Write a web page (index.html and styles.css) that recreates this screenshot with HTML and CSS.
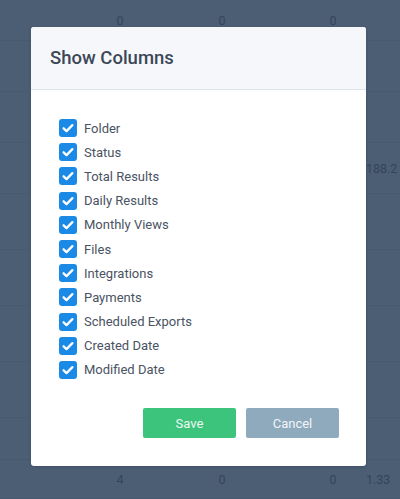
FILE: index.html
```html
<!DOCTYPE html>
<html lang="en">
<head>
<meta charset="utf-8">
<title>Show Columns</title>
<link rel="stylesheet" href="styles.css">
</head>
<body>
  <div class="table">
    <div class="row r-top"><span class="c1">0</span><span class="c2">0</span><span class="c3">0</span></div>
    <div class="row r-mid"></div>
    <div class="row r-mid"></div>
    <div class="row r-std"><span class="c4">188.2</span></div>
    <div class="row r-tall"></div>
    <div class="row r-tall"></div>
    <div class="row r-tall"></div>
    <div class="row r-tall"></div>
    <div class="row r-short"></div>
    <div class="row r-last"><span class="c1">4</span><span class="c2">0</span><span class="c3">0</span><span class="c4">1.33</span></div>
  </div>

  <div class="overlay">
    <div class="modal">
      <div class="modal-header">
        <h2 class="modal-title">Show Columns</h2>
      </div>
      <div class="modal-body">
        <ul class="col-list">
          <li class="col-item"><span class="check"><svg viewBox="0 0 18 18"><path d="M4.6 9.3l2.9 2.8 5.9-6"/></svg></span>Folder</li>
          <li class="col-item"><span class="check"><svg viewBox="0 0 18 18"><path d="M4.6 9.3l2.9 2.8 5.9-6"/></svg></span>Status</li>
          <li class="col-item"><span class="check"><svg viewBox="0 0 18 18"><path d="M4.6 9.3l2.9 2.8 5.9-6"/></svg></span>Total Results</li>
          <li class="col-item"><span class="check"><svg viewBox="0 0 18 18"><path d="M4.6 9.3l2.9 2.8 5.9-6"/></svg></span>Daily Results</li>
          <li class="col-item"><span class="check"><svg viewBox="0 0 18 18"><path d="M4.6 9.3l2.9 2.8 5.9-6"/></svg></span>Monthly Views</li>
          <li class="col-item"><span class="check"><svg viewBox="0 0 18 18"><path d="M4.6 9.3l2.9 2.8 5.9-6"/></svg></span>Files</li>
          <li class="col-item"><span class="check"><svg viewBox="0 0 18 18"><path d="M4.6 9.3l2.9 2.8 5.9-6"/></svg></span>Integrations</li>
          <li class="col-item"><span class="check"><svg viewBox="0 0 18 18"><path d="M4.6 9.3l2.9 2.8 5.9-6"/></svg></span>Payments</li>
          <li class="col-item"><span class="check"><svg viewBox="0 0 18 18"><path d="M4.6 9.3l2.9 2.8 5.9-6"/></svg></span>Scheduled Exports</li>
          <li class="col-item"><span class="check"><svg viewBox="0 0 18 18"><path d="M4.6 9.3l2.9 2.8 5.9-6"/></svg></span>Created Date</li>
          <li class="col-item"><span class="check"><svg viewBox="0 0 18 18"><path d="M4.6 9.3l2.9 2.8 5.9-6"/></svg></span>Modified Date</li>
        </ul>
        <div class="actions">
          <button class="btn btn-save">Save</button>
          <button class="btn btn-cancel">Cancel</button>
        </div>
      </div>
    </div>
  </div>
</body>
</html>
```

FILE: styles.css
```css
html, body {
  margin: 0;
  padding: 0;
  height: 100%;
  overflow: hidden;
}

body {
  background: #4b5e74;
  font-family: Roboto, "Liberation Sans", sans-serif;
}

/* dimmed data table underneath the dialog */
.table {
  display: flex;
  flex-direction: column;
}

.row {
  display: grid;
  grid-template-columns: 95px 50px 52px 50px 61px 50px 1fr;
  align-items: center;
  border-bottom: 1px solid #485a6f;
  color: #33455a;
  font-size: 12.5px;
  white-space: nowrap;
}

.row span { text-align: center; }
.row .c1 { grid-column: 2; }
.row .c2 { grid-column: 4; }
.row .c3 { grid-column: 6; }
.row .c4 { grid-column: 7; text-align: left; padding-left: 8px; }

.r-top   { height: 40px; }
.r-mid   { height: 50px; }
.r-std   { height: 50px; }
.r-tall  { height: 55px; }
.r-short { height: 41px; }
.r-last  { height: 38px; }

/* dialog */
.overlay {
  position: absolute;
  inset: 0;
}

.modal {
  position: absolute;
  left: 31px;
  top: 27px;
  width: 335px;
  background: #ffffff;
  border-radius: 3px;
  overflow: hidden;
  box-shadow: 0 1px 3px rgba(30, 40, 55, 0.25);
}

.modal-header {
  height: 63px;
  box-sizing: border-box;
  background: #f5f7fa;
  border-bottom: 1px solid #dfe4ea;
  display: flex;
  align-items: center;
  padding: 0 0 1px 19px;
}

.modal-title {
  margin: 0;
  font-size: 18.5px;
  font-weight: 500;
  color: #3c4757;
}

.modal-body {
  padding: 26px 27px 28px 28px;
}

.col-list {
  list-style: none;
  margin: 0;
  padding: 0;
}

.col-item {
  display: flex;
  align-items: center;
  gap: 7px;
  height: 24.2px;
  font-size: 13px;
  color: #4a5362;
}

.check {
  width: 18px;
  height: 18px;
  border-radius: 3px;
  background: #1a8ae6;
  display: flex;
  flex: none;
}

.check svg {
  width: 18px;
  height: 18px;
  fill: none;
  stroke: #ffffff;
  stroke-width: 2.3;
  stroke-linecap: round;
  stroke-linejoin: round;
}

.actions {
  display: flex;
  justify-content: flex-end;
  gap: 10px;
  margin-top: 26px;
}

.btn {
  width: 93px;
  height: 30px;
  border: none;
  border-radius: 2px;
  font-family: Roboto, "Liberation Sans", sans-serif;
  font-size: 13px;
  color: #eef7f2;
  padding: 0;
}

.btn-save { background: #3cc47c; }
.btn-cancel { background: #8faabd; color: #f2f5f8; }
```
